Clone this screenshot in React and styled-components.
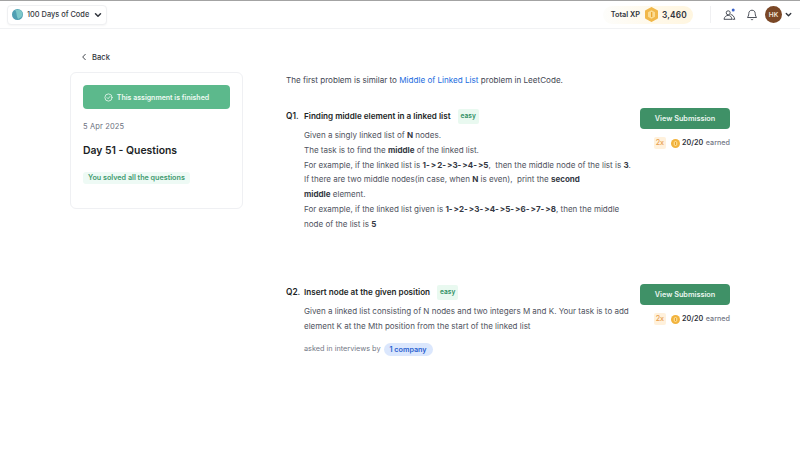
import React from "react";
import styled, { createGlobalStyle } from "styled-components";

const Global = createGlobalStyle`
  html, body { margin: 0; padding: 0; background: #fff; }
  body { font-family: Inter, "Noto Sans", sans-serif; color: #1c1f26; }
  * { box-sizing: border-box; }
`;
const Page = styled.div`width: 800px; height: 453px; overflow: hidden; background: #fff; border-top: 1px solid #a3a3a3;`;
const Header = styled.header`
  height: 28px; display: flex; align-items: center; padding: 0 7px 0 7px;
  border-bottom: 1px solid #f1f2f4;
`;
const Switcher = styled.button`
  display: flex; align-items: center; height: 20px; padding: 0 3px 0 4px; gap: 4px;
  background: #fff; border: 1px solid #eff0f2; border-radius: 4px; font: 500 7.4px Inter, sans-serif;
  color: #343841; box-shadow: 0 1px 2px rgba(20,20,30,.04);
`;
const Spacer = styled.div`flex: 1;`;
const XpPill = styled.div`
  display: flex; align-items: center; height: 18px; padding: 0 6px 0 8px; gap: 4px; border-radius: 9px;
  background: linear-gradient(90deg, #fdfdfb 0%, #fff9ea 55%, #fff6e0 100%); font: 600 7.3px Inter, sans-serif; color: #30343c;
  margin-right: 17px;
`;
const XpValue = styled.span`font-size: 8.3px; font-weight: 600; letter-spacing: .2px; margin-left: -1px;`;
const VDivider = styled.div`width: 1px; height: 17px; background: #f0f0f2; margin-right: 12px;`;
const IconSlot = styled.div`display: flex; align-items: center; margin-right: ${p => p.$gap}px;`;
const Avatar = styled.div`
  width: 17px; height: 17px; border-radius: 50%; background: #7a4726; color: #f1e6dc;
  font: 600 6.5px Inter, sans-serif; display: flex; align-items: center; justify-content: center;
  margin-right: 2px;
`;
const Body = styled.div`display: flex; padding-left: 70px;`;
const Side = styled.aside`width: 173px; flex: none; padding-top: 22px;`;
const Back = styled.div`
  display: flex; align-items: center; gap: 5px; margin-left: 11px; height: 12px;
  font: 500 7.6px Inter, sans-serif; color: #30343c;
`;
const Card = styled.section`
  margin-top: 9px; height: 137px; border: 1px solid #eff0f3; border-radius: 6px; padding: 12px 12px 0;
`;
const Finished = styled.div`
  height: 24px; border-radius: 4px; background: #5cb98c; color: #eefaf3;
  display: flex; align-items: center; justify-content: center; gap: 4px;
  font: 600 7px Inter, sans-serif;
`;
const DateText = styled.div`margin-top: 13px; font: 400 7.5px/10px Inter, sans-serif; color: #6b7080; letter-spacing: .15px;`;
const DayTitle = styled.h1`margin: 12px 0 0; font: 600 10.4px/14px Inter, sans-serif; color: #1c1f26;`;
const Solved = styled.div`
  display: inline-block; margin-top: 14px; height: 12px; padding: 0 5px; border-radius: 3px; background: #eefaf5;
  color: #3f9a70; font: 600 7.2px/12px Inter, sans-serif;
`;
const Main = styled.main`width: 444px; margin-left: 43px; padding-top: 45px;`;
const Intro = styled.p`margin: 0 0 21px; font: 400 8.1px/13px Inter, sans-serif; color: #434753;`;
const Link = styled.span`color: #1a6ce0;`;
const Question = styled.article`
  display: grid; grid-template-columns: 18px 316px 1fr 90px; height: ${p => p.$h}px;
`;
const Num = styled.div`font: 600 8.3px/16px Inter, sans-serif; color: #1c1f26;`;
const Content = styled.div`min-width: 0;`;
const TitleRow = styled.div`display: flex; align-items: center; gap: 7px; height: 16px; margin-bottom: 4px;`;
const Title = styled.h2`margin: 0; font: 600 8.15px/16px Inter, sans-serif; color: #1c1f26;`;
const Easy = styled.span`
  height: 15px; padding: 0 3px; border-radius: 2px; background: #e9f9f0; color: #2f8f63;
  font: 600 6.6px/15px Inter, sans-serif;
`;
const Line = styled.div`font: 400 8.03px/14.75px Inter, sans-serif; color: #4f5360; white-space: nowrap;
  b { font-weight: 700; color: #343843; word-spacing: -0.9px; }
`;
const Asked = styled.div`display: flex; align-items: center; gap: 3px; margin-top: 9px; font: 400 7.3px/12px Inter, sans-serif; color: #747886;`;
const Company = styled.span`
  height: 13px; padding: 0 6px; border-radius: 7px; background: #dbe7fd; color: #2a5fd0; font: 600 7.2px/13px Inter, sans-serif;
`;
const Actions = styled.div`grid-column: 4; display: flex; flex-direction: column; align-items: flex-end;`;
const ViewBtn = styled.button`
  width: 90px; height: 21px; border: 0; border-radius: 4px; background: #3f9167; color: #eaf6ef;
  font: 600 7.3px Inter, sans-serif; margin-bottom: 8px;
`;
const Earned = styled.div`display: flex; align-items: center; gap: 2.500px; font: 600 7.2px/12px Inter, sans-serif; color: #30343c;`;
const Mult = styled.span`padding: 0 2px; background: #fff1dc; color: #e8a04f; border-radius: 2px; font-weight: 500; margin-right: 2px;`;
const Muted = styled.span`color: #747886; font-weight: 500;`;

const Coin = ({ s = 9 }) => (
  <svg width={s} height={s} viewBox="0 0 10 10"><circle cx="5" cy="5" r="5" fill="#f2b33d" /><path d="M5 2 7 3.2v3.6L5 8 3 6.800V3.200z" fill="#fbd98a" /><path d="M4.500 3.400h1v3.200h-1z" fill="#e39a22" /></svg>
);
const BigCoin = () => (
  <svg width="15" height="15" viewBox="0 0 15 15"><path d="M7.500 1 13 4.200v6.600L7.500 14 2 10.800V4.200z" fill="#f1b84a" stroke="#f1b84a" strokeWidth="2" strokeLinejoin="round" /><path d="M7.500 3.200 11 5.200v4.600l-3.500 2L4 9.800V5.200z" fill="#fbdc92" /><path d="M7 5h1.300V10H7z" fill="#eaa52e" /></svg>
);
const Chevron = ({ s = 9 }) => (
  <svg width={s} height={s} viewBox="0 0 10 10" fill="none" stroke="#30343c" strokeWidth="1.500" strokeLinecap="round" strokeLinejoin="round"><path d="M2.500 3.800 5 6.300l2.500-2.500" /></svg>
);

function Earn() {
  return <Earned><Mult>2x</Mult><Coin /><span>20/20</span> <Muted>earned</Muted></Earned>;
}

export default function App() {
  return (
    <Page>
      <Global />
      <Header>
        <Switcher>
          <svg width="11" height="11" viewBox="0 0 11 11"><circle cx="5.500" cy="5.500" r="5.500" fill="#4f9fb3" /><path d="M3 1c2 2 1 5 3 9 3-1 4.500-3 4.500-5S9 1 7 .5z" fill="#7cc7c9" /></svg>
          100 Days of Code
          <Chevron s={10} />
        </Switcher>
        <Spacer />
        <XpPill>Total XP <BigCoin /><XpValue>3,460</XpValue></XpPill>
        <VDivider />
        <IconSlot $gap={10}>
          <svg width="13" height="13" viewBox="0 0 13 13" fill="none" stroke="#3a3e48" strokeWidth=".9" strokeLinejoin="round"><circle cx="5.200" cy="4.800" r="2" /><path d="M1 11.300c.4-2.500 2.200-3.900 4.200-3.900s3.400 1.400 3.800 3.900zM7.600 6.600c1.800-.2 3.600 1.800 4.200 4.700H9.500" /><circle cx="10.200" cy="2" r="1.500" fill="#3b62c9" stroke="none" /></svg>
        </IconSlot>
        <IconSlot $gap={7}>
          <svg width="12" height="12" viewBox="0 0 12 12" fill="none" stroke="#3a3e48" strokeWidth=".9" strokeLinejoin="round"><path d="M6 1.200c-2 0-3.200 1.500-3.200 3.300 0 2.200-1 3.300-1.300 4h9c-.3-.7-1.300-1.800-1.300-4 0-1.800-1.200-3.300-3.200-3.300zM4.800 10.200c.4.600 2 .6 2.400 0" /></svg>
        </IconSlot>
        <Avatar>HK</Avatar>
        <Chevron s={9} />
      </Header>
      <Body>
        <Side>
          <Back>
            <svg width="6" height="8" viewBox="0 0 6 8" fill="none" stroke="#30343c" strokeWidth=".9" strokeLinecap="round" strokeLinejoin="round"><path d="M4.300 1.300 1.700 4l2.600 2.700" /></svg>
            Back
          </Back>
          <Card>
            <Finished>
              <svg width="9" height="9" viewBox="0 0 9 9" fill="none" stroke="#eefaf3" strokeWidth=".8" strokeLinecap="round" strokeLinejoin="round"><circle cx="4.500" cy="4.500" r="3.600" /><path d="M3 4.600 4.100 5.700 6 3.500" /></svg>
              This assignment is finished
            </Finished>
            <DateText>5 Apr 2025</DateText>
            <DayTitle>Day 51 - Questions</DayTitle>
            <Solved>You solved all the questions</Solved>
          </Card>
        </Side>
        <Main>
          <Intro>The first problem is similar to <Link>Middle of Linked List</Link> problem in LeetCode.</Intro>
          <Question $h={176}>
            <Num>Q1.</Num>
            <Content>
              <TitleRow><Title>Finding middle element in a linked list</Title><Easy>easy</Easy></TitleRow>
              <Line>Given a singly linked list of <b>N</b> nodes.</Line>
              <Line>The task is to find the <b>middle</b> of the linked list.</Line>
              <Line>For example, if the linked list is <b>1- &gt; 2- &gt;3- &gt;4- &gt;5</b>,&nbsp; then the middle node of the list is <b>3</b>.</Line>
              <Line>If there are two middle nodes(in case, when <b>N</b> is even),&nbsp; print the <b>second</b></Line>
              <Line><b>middle</b> element.</Line>
              <Line>For example, if the linked list given is <b>1- &gt;2- &gt;3- &gt;4- &gt;5- &gt;6- &gt;7- &gt;8</b>, then the middle</Line>
              <Line>node of the list is <b>5</b></Line>
            </Content>
            <Actions><ViewBtn>View Submission</ViewBtn><Earn /></Actions>
          </Question>
          <Question $h={80}>
            <Num>Q2.</Num>
            <Content>
              <TitleRow><Title>Insert node at the given position</Title><Easy>easy</Easy></TitleRow>
              <Line>Given a linked list consisting of N nodes and two integers M and K. Your task is to add</Line>
              <Line>element K at the Mth position from the start of the linked list</Line>
              <Asked>asked in interviews by <Company>1 company</Company></Asked>
            </Content>
            <Actions><ViewBtn>View Submission</ViewBtn><Earn /></Actions>
          </Question>
        </Main>
      </Body>
    </Page>
  );
}
